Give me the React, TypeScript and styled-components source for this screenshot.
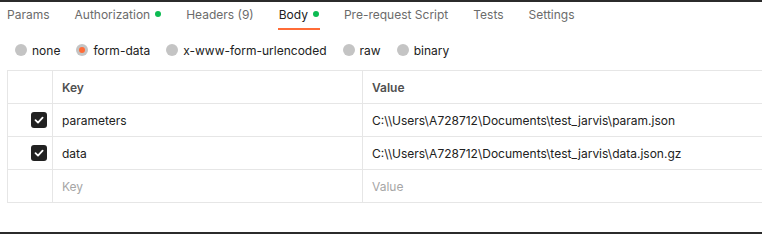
import React from 'react';
import { styled, createGlobalStyle } from 'styled-components';

const GlobalStyle = createGlobalStyle`
  html, body {
    margin: 0;
    padding: 0;
    background: #ffffff;
  }
  body {
    font-family: Inter, "Noto Sans", "Liberation Sans", sans-serif;
    color: #212121;
  }
`;

const Frame = styled.main`
  width: 762px;
  height: 234px;
  box-sizing: border-box;
  border-top: 2px solid #2b2b2b;
  border-bottom: 2px solid #2b2b2b;
  overflow: hidden;
  display: flex;
  flex-direction: column;
`;

const TabBar = styled.nav`
  display: flex;
  align-items: stretch;
  height: 28px;
  padding-left: 6px;
  gap: 23px;
`;

const Tab = styled.div<{ $active?: boolean }>`
  display: flex;
  align-items: center;
  gap: 5px;
  font-size: 12px;
  color: ${(p) => (p.$active ? '#212121' : '#6b6b6b')};
  border-bottom: 2px solid ${(p) => (p.$active ? '#ff6c37' : 'transparent')};
  padding: 0 1px 2px;
  white-space: nowrap;
`;

const Dot = styled.span`
  width: 6px;
  height: 6px;
  border-radius: 50%;
  background: #0cbb52;
`;

const RadioRow = styled.div`
  display: flex;
  align-items: center;
  height: 40px;
  padding-left: 15px;
  gap: 16px;
`;

const RadioItem = styled.label`
  display: flex;
  align-items: center;
  gap: 5px;
  font-size: 12px;
  color: #212121;
`;

const RadioMark = styled.span<{ $checked?: boolean }>`
  width: 12px;
  height: 12px;
  border-radius: 50%;
  background: #c4c4c4;
  display: flex;
  align-items: center;
  justify-content: center;
  &::after {
    content: '';
    width: 6px;
    height: 6px;
    border-radius: 50%;
    background: ${(p) => (p.$checked ? '#ff6c37' : 'transparent')};
  }
`;

const Table = styled.div`
  margin-left: 7px;
  width: 800px;
  border-top: 1px solid #e6e6e6;
  border-left: 1px solid #e6e6e6;
`;

const Row = styled.div`
  display: grid;
  grid-template-columns: 45px 310px 1fr;
  height: 33px;
  border-bottom: 1px solid #e6e6e6;
  box-sizing: border-box;
`;

const Cell = styled.div<{ $tone?: 'head' | 'body' | 'hint' }>`
  display: flex;
  align-items: center;
  padding-left: 9px;
  font-size: 12px;
  font-weight: ${(p) => (p.$tone === 'head' ? 600 : 400)};
  color: ${(p) =>
    p.$tone === 'head' ? '#505050' : p.$tone === 'hint' ? '#a6a6a6' : '#212121'};
  border-right: 1px solid #e6e6e6;
  white-space: nowrap;
`;

const CheckCell = styled.div`
  display: flex;
  align-items: center;
  justify-content: flex-end;
  padding-right: 5px;
  border-right: 1px solid #e6e6e6;
`;

const CheckBox = styled.span`
  width: 16px;
  height: 16px;
  border-radius: 3px;
  background: #212121;
  display: flex;
  align-items: center;
  justify-content: center;
`;

const Check = () => (
  <CheckBox>
    <svg width="10" height="10" viewBox="0 0 10 10" fill="none">
      <path d="M1.5 5.2 L4 7.6 L8.6 2.6" stroke="#fff" strokeWidth="1.8" strokeLinecap="round" strokeLinejoin="round" />
    </svg>
  </CheckBox>
);

const tabs = [
  { label: 'Params' },
  { label: 'Authorization', dot: true },
  { label: 'Headers (9)' },
  { label: 'Body', dot: true, active: true },
  { label: 'Pre-request Script' },
  { label: 'Tests' },
  { label: 'Settings' },
];

const modes = ['none', 'form-data', 'x-www-form-urlencoded', 'raw', 'binary'];

const rows = [
  { key: 'parameters', value: 'C:\\\\Users\\A728712\\Documents\\test_jarvis\\param.json' },
  { key: 'data', value: 'C:\\\\Users\\A728712\\Documents\\test_jarvis\\data.json.gz' },
];

const App: React.FC = () => (
  <Frame>
    <GlobalStyle />
    <TabBar>
      {tabs.map((t) => (
        <Tab key={t.label} $active={t.active}>
          {t.label}
          {t.dot && <Dot />}
        </Tab>
      ))}
    </TabBar>

    <RadioRow>
      {modes.map((m) => (
        <RadioItem key={m}>
          <RadioMark $checked={m === 'form-data'} />
          {m}
        </RadioItem>
      ))}
    </RadioRow>

    <Table>
      <Row>
        <CheckCell />
        <Cell $tone="head">Key</Cell>
        <Cell $tone="head">Value</Cell>
      </Row>
      {rows.map((r) => (
        <Row key={r.key}>
          <CheckCell>
            <Check />
          </CheckCell>
          <Cell>{r.key}</Cell>
          <Cell>{r.value}</Cell>
        </Row>
      ))}
      <Row>
        <CheckCell />
        <Cell $tone="hint">Key</Cell>
        <Cell $tone="hint">Value</Cell>
      </Row>
    </Table>
  </Frame>
);

export default App;
